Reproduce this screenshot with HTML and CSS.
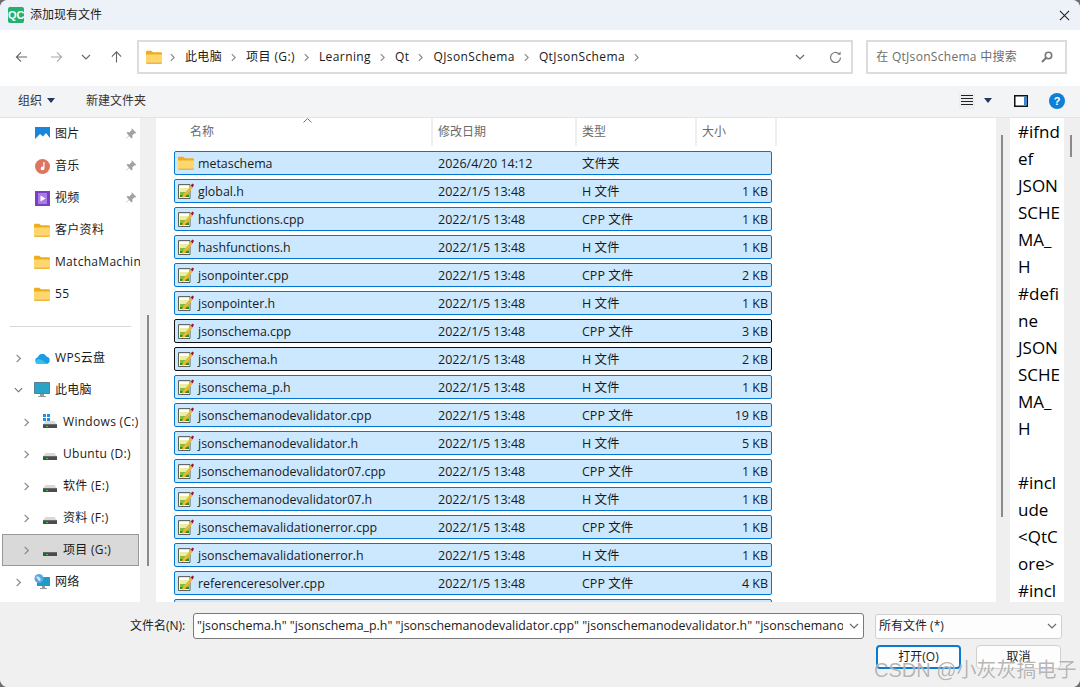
FILE: index.html
```html
<!DOCTYPE html>
<html lang="zh-CN">
<head>
<meta charset="utf-8">
<title>添加现有文件</title>
<link rel="stylesheet" href="styles.css">
</head>
<body>
<svg class="defs" width="0" height="0">
  <symbol id="folder" viewBox="0 0 16 14">
    <path d="M0 2.2C0 1.3.6.8 1.4.8h4l1.5 1.4h7.7c.8 0 1.4.6 1.4 1.4V5H0z" fill="#f0ab1e"/>
    <path d="M0 4.4h16v8.2c0 .8-.6 1.4-1.4 1.4H1.4C.6 14 0 13.4 0 12.6z" fill="#fdd76e"/>
    <path d="M0 12.6h16v.2c0 .7-.6 1.2-1.4 1.2H1.4C.6 14 0 13.5 0 12.8z" fill="#eeb544"/>
  </symbol>
  <symbol id="file" viewBox="0 0 16 16">
    <path d="M.5 1.5h11.5v14H.5z" fill="#fff" stroke="#5d5d5d"/>
    <path d="M2 1v1.5M4 1v1.5M6 1v1.5M8 1v1.5M10 1v1.5" stroke="#777" stroke-width=".8"/>
    <path d="M2 5h9v4H2z" fill="#e8f0a8"/>
    <path d="M2 9h9v5H2z" fill="#7fbf3c"/>
    <path d="M2 12h9v2H2z" fill="#2e8a2c"/>
    <path d="M4.5 12.5 12.6 3l2 1.7-7.7 9.2-3 .9z" fill="#f2b632"/>
    <path d="M12.8 2.8 14.2.6 16 1.8l-1.3 2.8z" fill="#8e1a2c"/>
  </symbol>
  <symbol id="drive" viewBox="0 0 14 7">
    <path d="M2.5 0h9L14 3.5H0z" fill="#d9d9d9"/>
    <path d="M0 3.2h14V7H0z" fill="#4b4b4b"/>
    <path d="M3 5h2v1H3z" fill="#35d04c"/>
  </symbol>
  <symbol id="chev-r" viewBox="0 0 6 10"><path d="M1 1l4 4-4 4" fill="none" stroke="#8a8a8a" stroke-width="1.4"/></symbol>
  <symbol id="chev-d" viewBox="0 0 10 6"><path d="M1 1l4 4 4-4" fill="none" stroke="#6b6b6b" stroke-width="1.2"/></symbol>
  <symbol id="pin" viewBox="0 0 12 12"><path d="M7 .5l4.5 4.5-1 .6-1-.3-2.2 2.2.2 2-1 1L4 8 1 11 .8 10.8 3.8 7.500 1.500 5l1-1 2 .2 2.200-2.200-.3-1z" fill="#a3a3a3"/></symbol>
</svg>
<div class="window">
  <header class="titlebar">
    <span class="qc">QC</span>
    <span class="title">添加现有文件</span>
    <svg class="close" width="11" height="11" viewBox="0 0 12 12"><path d="M1 1l10 10M11 1L1 11" stroke="#222" stroke-width="1.2"/></svg>
  </header>

  <div class="navrow">
    <div class="navbtns">
      <svg width="13" height="14" viewBox="0 0 14 14"><path d="M13 7H1.500M6.500 2 1.500 7l5 5" fill="none" stroke="#666" stroke-width="1.2"/></svg>
      <svg width="13" height="14" viewBox="0 0 14 14"><path d="M1 7h11.500M7.500 2l5 5-5 5" fill="none" stroke="#aaa" stroke-width="1.2"/></svg>
      <svg width="10" height="6"><use href="#chev-d"/></svg>
      <svg width="13" height="14" viewBox="0 0 14 14"><path d="M7 13V1.500M2 6.500l5-5 5 5" fill="none" stroke="#666" stroke-width="1.2"/></svg>
    </div>
    <div class="address">
      <svg class="addr-folder" width="16" height="14"><use href="#folder"/></svg>
      <svg class="crumb-sep" width="5" height="9"><use href="#chev-r"/></svg>
      <span>此电脑</span>
      <svg class="crumb-sep" width="5" height="9"><use href="#chev-r"/></svg>
      <span>项目 (G:)</span>
      <svg class="crumb-sep" width="5" height="9"><use href="#chev-r"/></svg>
      <span>Learning</span>
      <svg class="crumb-sep" width="5" height="9"><use href="#chev-r"/></svg>
      <span>Qt</span>
      <svg class="crumb-sep" width="5" height="9"><use href="#chev-r"/></svg>
      <span>QJsonSchema</span>
      <svg class="crumb-sep" width="5" height="9"><use href="#chev-r"/></svg>
      <span>QtJsonSchema</span>
      <svg class="crumb-sep" width="5" height="9"><use href="#chev-r"/></svg>
      <svg class="addr-down" width="10" height="6"><use href="#chev-d"/></svg>
      <svg class="addr-refresh" width="13" height="13" viewBox="0 0 13 13"><path d="M11.500 6.500a5 5 0 1 1-1.600-3.700" fill="none" stroke="#777" stroke-width="1.2"/><path d="M11.600.6v3.200H8.400z" fill="#777"/></svg>
    </div>
    <div class="search">
      <span>在 QtJsonSchema 中搜索</span>
      <svg width="12" height="12" viewBox="0 0 12 12"><circle cx="7.500" cy="4.500" r="3.200" fill="none" stroke="#777" stroke-width="1.6"/><path d="M5 7 1 11" stroke="#777" stroke-width="2"/></svg>
    </div>
  </div>

  <div class="toolbar">
    <span class="tool">组织</span><span class="caret"></span>
    <span class="tool newfolder">新建文件夹</span>
    <span class="tool-right">
      <span class="viewbtn"><svg width="12" height="11" viewBox="0 0 12 11"><path d="M0 .5h12M0 3.500h12M0 6.500h12M0 9.500h12" stroke="#222"/></svg></span>
      <span class="caret"></span>
      <svg class="pane" width="14" height="12" viewBox="0 0 14 12"><path d="M.75.75h12.500v10.500H.75z" fill="#fff" stroke="#111" stroke-width="1.5"/><path d="M10 1.500h2.500v9H10z" fill="#2b88d8"/></svg>
      <span class="help">?</span>
    </span>
  </div>

  <main class="main">
    <nav class="sidebar">
      <div class="side-row"><span class="arrow"></span><svg class="sicon" width="15" height="14" viewBox="0 0 15 14"><path d="M0 0h15v14H0z" fill="#1a86d9"/><path d="M0 12l5-5 3 2.500L11 6l4 5v3H0z" fill="#fff"/></svg><span class="stext">图片</span><svg class="pin" width="12" height="12"><use href="#pin"/></svg></div>
      <div class="side-row"><span class="arrow"></span><svg class="sicon" width="15" height="15" viewBox="0 0 15 15"><circle cx="7.500" cy="7.500" r="7.500" fill="#dd7561"/><path d="M9.500 3v6.300a1.900 1.900 0 1 1-1.200-1.700V3z" fill="#fff"/></svg><span class="stext">音乐</span><svg class="pin" width="12" height="12"><use href="#pin"/></svg></div>
      <div class="side-row"><span class="arrow"></span><svg class="sicon" width="15" height="15" viewBox="0 0 15 15"><path d="M0 0h15v15H0z" fill="#7b3fc4"/><path d="M3 2h9v11H3z" fill="#a87be8"/><path d="M5.500 4.500v6l5-3z" fill="#fff"/></svg><span class="stext">视频</span><svg class="pin" width="12" height="12"><use href="#pin"/></svg></div>
      <div class="side-row"><span class="arrow"></span><svg class="sicon" width="16" height="14"><use href="#folder"/></svg><span class="stext">客户资料</span></div>
      <div class="side-row"><span class="arrow"></span><svg class="sicon" width="16" height="14"><use href="#folder"/></svg><span class="stext">MatchaMachine</span></div>
      <div class="side-row"><span class="arrow"></span><svg class="sicon" width="16" height="14"><use href="#folder"/></svg><span class="stext">55</span></div>
      <div class="side-sep"></div>
      <div class="side-row"><svg class="arrow" width="5" height="9"><use href="#chev-r"/></svg><svg class="sicon" width="15" height="11" viewBox="0 0 15 11"><path d="M3.500 11a3.400 3.400 0 0 1-.6-6.700A4.600 4.600 0 0 1 11.500 3.500 3.800 3.800 0 0 1 11.500 11z" fill="#1c9be6"/><path d="M2 11a3 3 0 0 1 1-5c3 0 6 2 9 5z" fill="#34c3ee"/></svg><span class="stext">WPS云盘</span></div>
      <div class="side-row"><svg class="arrow" width="9" height="6"><use href="#chev-d"/></svg><svg class="sicon" width="16" height="16" viewBox="0 0 16 16"><path d="M.5.5h15v11H.5z" fill="#28a4c9" stroke="#5a7f90"/><path d="M6 12h4v2h2v1H4v-1h2z" fill="#9a9a9a"/></svg><span class="stext">此电脑</span></div>
      <div class="side-row lvl2"><svg class="arrow" width="5" height="9"><use href="#chev-r"/></svg><span class="drive-wrap"><svg class="win" width="7" height="7" viewBox="0 0 7 7"><path d="M0 0h3v3H0zM4 0h3v3H4zM0 4h3v3H0zM4 4h3v3H4z" fill="#1d8fe6"/></svg><svg width="14" height="7"><use href="#drive"/></svg></span><span class="stext">Windows (C:)</span></div>
      <div class="side-row lvl2"><svg class="arrow" width="5" height="9"><use href="#chev-r"/></svg><span class="drive-wrap"><svg width="14" height="7"><use href="#drive"/></svg></span><span class="stext">Ubuntu (D:)</span></div>
      <div class="side-row lvl2"><svg class="arrow" width="5" height="9"><use href="#chev-r"/></svg><span class="drive-wrap"><svg width="14" height="7"><use href="#drive"/></svg></span><span class="stext">软件 (E:)</span></div>
      <div class="side-row lvl2"><svg class="arrow" width="5" height="9"><use href="#chev-r"/></svg><span class="drive-wrap"><svg width="14" height="7"><use href="#drive"/></svg></span><span class="stext">资料 (F:)</span></div>
      <div class="side-row lvl2 current"><svg class="arrow" width="5" height="9"><use href="#chev-r"/></svg><span class="drive-wrap"><svg width="14" height="7"><use href="#drive"/></svg></span><span class="stext">项目 (G:)</span></div>
      <div class="side-row"><svg class="arrow" width="5" height="9"><use href="#chev-r"/></svg><svg class="sicon" width="16" height="16" viewBox="0 0 16 16"><path d="M3 3h13v9H3z" fill="#1e9cc8"/><path d="M8 12h3v2h2v1H6v-1h2z" fill="#999"/><circle cx="5" cy="4.500" r="4.500" fill="#5ba7e0"/><path d="M2 3c2-1 3 0 4 1s1 3-1 3z" fill="#cfe6f7"/></svg><span class="stext">网络</span></div>
    </nav>
    <div class="side-scroll"><span class="side-thumb"></span></div>

    <section class="files">
      <div class="headers">
        <span class="h h-name">名称<svg class="sort" width="9" height="5" viewBox="0 0 9 5"><path d="M.5 4.500l4-4 4 4" fill="none" stroke="#777"/></svg></span>
        <span class="h h-date">修改日期</span>
        <span class="h h-type">类型</span>
        <span class="h h-size">大小</span>
      </div>
      <div class="rows">
        <div class="row"><svg class="ficon" width="16" height="14"><use href="#folder"/></svg><span class="n">metaschema</span><span>2026/4/20 14:12</span><span>文件夹</span><span class="s"></span></div>
        <div class="row"><svg class="ficon" width="16" height="16"><use href="#file"/></svg><span class="n">global.h</span><span>2022/1/5 13:48</span><span>H 文件</span><span class="s">1 KB</span></div>
        <div class="row"><svg class="ficon" width="16" height="16"><use href="#file"/></svg><span class="n">hashfunctions.cpp</span><span>2022/1/5 13:48</span><span>CPP 文件</span><span class="s">1 KB</span></div>
        <div class="row"><svg class="ficon" width="16" height="16"><use href="#file"/></svg><span class="n">hashfunctions.h</span><span>2022/1/5 13:48</span><span>H 文件</span><span class="s">1 KB</span></div>
        <div class="row"><svg class="ficon" width="16" height="16"><use href="#file"/></svg><span class="n">jsonpointer.cpp</span><span>2022/1/5 13:48</span><span>CPP 文件</span><span class="s">2 KB</span></div>
        <div class="row"><svg class="ficon" width="16" height="16"><use href="#file"/></svg><span class="n">jsonpointer.h</span><span>2022/1/5 13:48</span><span>H 文件</span><span class="s">1 KB</span></div>
        <div class="row focus"><svg class="ficon" width="16" height="16"><use href="#file"/></svg><span class="n">jsonschema.cpp</span><span>2022/1/5 13:48</span><span>CPP 文件</span><span class="s">3 KB</span></div>
        <div class="row focus"><svg class="ficon" width="16" height="16"><use href="#file"/></svg><span class="n">jsonschema.h</span><span>2022/1/5 13:48</span><span>H 文件</span><span class="s">2 KB</span></div>
        <div class="row"><svg class="ficon" width="16" height="16"><use href="#file"/></svg><span class="n">jsonschema_p.h</span><span>2022/1/5 13:48</span><span>H 文件</span><span class="s">1 KB</span></div>
        <div class="row"><svg class="ficon" width="16" height="16"><use href="#file"/></svg><span class="n">jsonschemanodevalidator.cpp</span><span>2022/1/5 13:48</span><span>CPP 文件</span><span class="s">19 KB</span></div>
        <div class="row"><svg class="ficon" width="16" height="16"><use href="#file"/></svg><span class="n">jsonschemanodevalidator.h</span><span>2022/1/5 13:48</span><span>H 文件</span><span class="s">5 KB</span></div>
        <div class="row"><svg class="ficon" width="16" height="16"><use href="#file"/></svg><span class="n">jsonschemanodevalidator07.cpp</span><span>2022/1/5 13:48</span><span>CPP 文件</span><span class="s">1 KB</span></div>
        <div class="row"><svg class="ficon" width="16" height="16"><use href="#file"/></svg><span class="n">jsonschemanodevalidator07.h</span><span>2022/1/5 13:48</span><span>H 文件</span><span class="s">1 KB</span></div>
        <div class="row"><svg class="ficon" width="16" height="16"><use href="#file"/></svg><span class="n">jsonschemavalidationerror.cpp</span><span>2022/1/5 13:48</span><span>CPP 文件</span><span class="s">1 KB</span></div>
        <div class="row"><svg class="ficon" width="16" height="16"><use href="#file"/></svg><span class="n">jsonschemavalidationerror.h</span><span>2022/1/5 13:48</span><span>H 文件</span><span class="s">1 KB</span></div>
        <div class="row"><svg class="ficon" width="16" height="16"><use href="#file"/></svg><span class="n">referenceresolver.cpp</span><span>2022/1/5 13:48</span><span>CPP 文件</span><span class="s">4 KB</span></div>
        <div class="row"></div>
      </div>
    </section>

    <aside class="preview-pane">
      <span class="pv-thumb-l"></span>
      <div class="preview">#ifndef<br>JSONSCHEMA_H<br>#define<br>JSONSCHEMA_H<br><br>#include<br>&lt;QtCore&gt;<br>#include</div>
      <span class="pv-thumb-r"></span>
    </aside>
  </main>

  <footer class="bottom">
    <div class="name-line">
      <span class="label">文件名(N):</span>
      <div class="name-input">
        <span class="name-text">"jsonschema.h" "jsonschema_p.h" "jsonschemanodevalidator.cpp" "jsonschemanodevalidator.h" "jsonschemano</span>
        <svg width="10" height="6"><use href="#chev-d"/></svg>
      </div>
      <div class="filter"><span>所有文件 (*)</span><svg width="10" height="6"><use href="#chev-d"/></svg></div>
    </div>
    <div class="buttons">
      <span class="btn primary">打开(O)</span>
      <span class="btn">取消</span>
    </div>
  </footer>
  <span class="watermark">CSDN @小灰灰搞电子</span>
</div>
</body>
</html>
```
FILE: styles.css
```css
* { box-sizing: border-box; }
html, body { margin: 0; height: 100%; background: #6f6f6f; overflow: hidden; }
body { font: 13px/18px "Open Sans", "Noto Sans CJK SC", sans-serif; color: #1a1a1a; }
.defs { position: absolute; }
svg { flex: none; display: block; }

.window {
  position: relative; width: 1080px; height: 687px; display: flex; flex-direction: column;
  background: #f0f0f0; border-radius: 8px; overflow: hidden;
}

/* title bar */
.titlebar { height: 30px; flex: none; display: flex; align-items: center; background: #edf2f9; padding: 0 10px 0 8px; }
.qc { width: 16px; height: 16px; border-radius: 2px; background: #23b26d; color: #fff; font: bold 11px/16px "Liberation Sans", sans-serif; text-align: center; }
.title { margin-left: 6px; font-size: 12px; }
.close { margin-left: auto; }

/* address row */
.navrow { height: 56px; flex: none; background: #fff; display: flex; align-items: center; padding: 0 13px 2px 15px; }
.navbtns { width: 122px; display: flex; align-items: center; }
.navbtns svg:nth-child(2) { margin-left: 22px; }
.navbtns svg:nth-child(3) { margin-left: 18px; }
.navbtns svg:nth-child(4) { margin-left: 19px; }
.address { width: 717px; height: 34px; border: 2px solid #dcdcdc; display: flex; align-items: center; padding: 0 9px 0 7px; font-size: 12px; letter-spacing: .4px; }
.addr-folder { margin-right: 8px; }
.crumb-sep { margin: 0 10px 0 0; }
.address span { margin-right: 9px; }
.addr-down { margin-left: auto; }
.addr-refresh { margin-left: 24px; }
.search { width: 201px; height: 34px; margin-left: 13px; border: 2px solid #dcdcdc; display: flex; align-items: center; justify-content: space-between; padding: 0 12px 0 8px; color: #6d6d6d; font-size: 12px; letter-spacing: .3px; }

/* toolbar */
.toolbar { height: 32px; flex: none; background: #f3f4f6; border-bottom: 1px solid #e3e3e3; display: flex; align-items: center; padding: 0 15px 2px 18px; font-size: 12px; color: #333; }
.caret { width: 0; height: 0; border: 4px solid transparent; border-top: 5px solid #1f3a5f; border-bottom: 0; margin-left: 5px; }
.newfolder { margin-left: 31px; }
.tool-right { margin-left: auto; display: flex; align-items: center; }
.viewbtn { width: 16px; height: 16px; background: #eceef0; display: flex; align-items: center; justify-content: center; }
.tool-right .caret { margin-left: 9px; }
.pane { margin-left: 22px; }
.help { width: 16px; height: 16px; margin-left: 21px; border-radius: 50%; background: #0f7fd6; color: #fff; font: bold 11px/16px "Liberation Sans", sans-serif; text-align: center; }

/* main */
.main { flex: 1; min-height: 0; display: flex; background: #fff; }
.sidebar { width: 140px; flex: none; overflow: hidden; }
.side-row { height: 32px; display: flex; align-items: center; padding-left: 14px; white-space: nowrap; position: relative; font-size: 12px; letter-spacing: .3px; }
.side-row .arrow { width: 9px; margin-right: 11px; flex: none; }
.sicon { margin-right: 5px; margin-left: 1px; }
.stext { flex: none; }
.side-row .sicon[width="16"] { margin-left: 0; margin-right: 5px; }
.pin { position: absolute; left: 125px; top: 10px; }
.side-sep { height: 1px; margin: 16px 9px 15px 10px; background: #d9d9d9; }
.lvl2 { padding-left: 22px; }
.lvl2 .arrow { margin-right: 12px; }
.drive-wrap { width: 14px; height: 16px; margin-right: 6px; display: flex; align-items: flex-end; position: relative; padding-bottom: 2px; }
.win { position: absolute; left: 0; top: 0; }
.current { margin: 0 1px 0 2px; padding-left: 20px; background: #d9d9d9; border: 1px solid #999; height: 32px; }
.current .arrow { margin-left: -1px; }
.side-scroll { width: 16px; flex: none; background: #f0f0f0; position: relative; }
.side-thumb { position: absolute; left: 7px; top: 197px; width: 2px; height: 251px; background: #8a8a8a; }

.files { width: 840px; flex: none; overflow: hidden; padding-left: 18px; }
.headers { height: 28px; display: grid; grid-template-columns: 259px 144px 120px 80px; color: #6a6a6a; font-size: 12px; line-height: 28px; }
.h { padding-left: 5px; border-right: 2px solid #eee; position: relative; }
.h-name { padding-left: 16px; }
.sort { position: absolute; left: 129px; top: 0; }
.rows { margin-top: 5px; display: flex; flex-direction: column; gap: 4px; }
.row {
  width: 598px; height: 24px; flex: none; display: grid; grid-template-columns: 240px 144px 108px 78px; align-items: center;
  background: #cce8ff; border: 1px solid #0078d4; border-radius: 2px; padding: 2px 0 0 23px;
  white-space: nowrap; font-size: 12.5px;
}
.row.focus { border-color: #111; }
.ficon { position: absolute; margin: -2px 0 0 -20px; }
.s { text-align: right; }
.n { font-size: 12.4px; }

.preview-pane { width: 84px; flex: none; background: #efefef; position: relative; padding-left: 14px; }
.preview { width: 54px; height: 100%; background: #fff; padding: 0 0 0 8px; font-size: 17px; line-height: 27px; color: #000; word-break: break-all; overflow: hidden; }
.pv-thumb-l { position: absolute; left: 5px; top: 17px; width: 2px; height: 382px; background: #8a8a8a; }
.pv-thumb-r { position: absolute; left: 74px; top: 17px; width: 2px; height: 22px; background: #8a8a8a; }

/* footer */
.bottom { height: 85px; flex: none; background: #f0f0f0; padding-top: 11px; font-size: 12px; position: relative; }
.name-line { display: flex; align-items: center; padding-left: 130px; }
.label { width: 63px; }
.name-input { width: 671px; height: 26px; background: #fff; border: 1px solid #7a7a7a; border-radius: 3px; display: flex; align-items: center; padding: 0 4px 0 3px; font-size: 12.4px; }
.name-text { flex: 1; overflow: hidden; white-space: nowrap; }
.name-input svg { margin-left: 6px; }
.filter { width: 187px; height: 25px; margin-left: 11px; background: #fdfdfd; border: 1px solid #d0d0d0; border-radius: 3px; display: flex; align-items: center; justify-content: space-between; padding: 0 4px 0 3px; }
.buttons { display: flex; gap: 15px; padding: 6px 0 0 876px; }
.btn { width: 85px; height: 24px; background: #fdfdfd; border: 1px solid #d0d0d0; border-radius: 4px; text-align: center; line-height: 22px; }
.btn.primary { border: 2px solid #0a7ad1; line-height: 20px; }
.watermark { position: absolute; left: 874px; top: 658px; font: 20px/24px "Liberation Sans", "Noto Sans CJK SC", sans-serif; color: rgba(90, 90, 90, .45); text-shadow: 0 0 1px #fff; white-space: nowrap; }
```
